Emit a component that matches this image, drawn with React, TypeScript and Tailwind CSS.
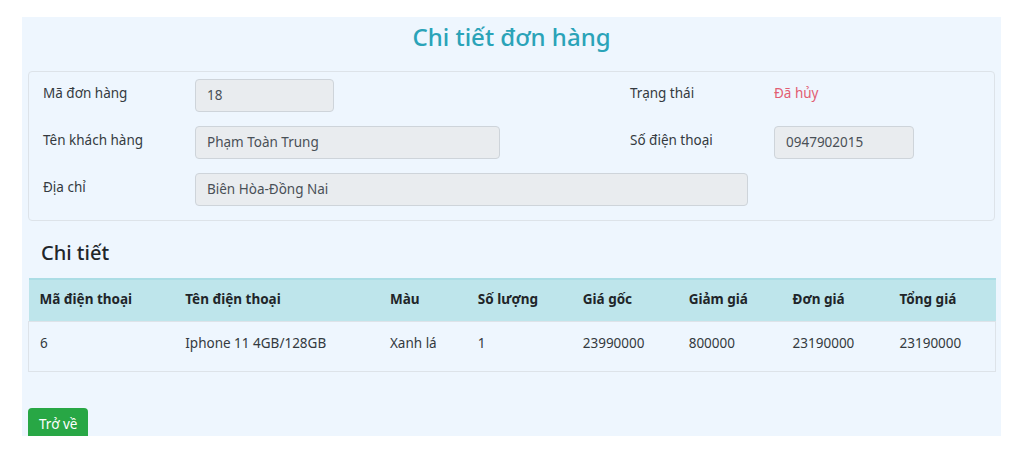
import React from 'react'

const COLS = [
  { label: 'Mã điện thoại', w: 'w-[146px]' },
  { label: 'Tên điện thoại', w: 'w-[205px]' },
  { label: 'Màu', w: 'w-[88px]' },
  { label: 'Số lượng', w: 'w-[105px]' },
  { label: 'Giá gốc', w: 'w-[106px]' },
  { label: 'Giảm giá', w: 'w-[104px]' },
  { label: 'Đơn giá', w: 'w-[107px]' },
  { label: 'Tổng giá', w: 'w-[107px]' },
]

const ROWS = [['6', 'Iphone 11 4GB/128GB', 'Xanh lá', '1', '23990000', '800000', '23190000', '23190000']]

function Field({ value, w }: { value: string; w: string }) {
  return (
    <div className={`${w} h-[33px] flex items-center px-[11px] bg-[#e9ecef] border border-[#ced4da] rounded text-[13.5px] text-[#495057]`}>
      {value}
    </div>
  )
}

export default function App() {
  return (
    <div className="w-[1024px] h-[456px] bg-white font-['Noto_Sans',sans-serif] text-[#212529]">
      <div className="pt-[17px] pl-[22px]">
        <div className="w-[979px] h-[419px] overflow-hidden bg-[#eef6fe] px-[6px]">
          {/* Title */}
          <h1 className="text-center text-[24px] leading-[40px] font-medium text-[#2aa3b8] h-[54px]">
            Chi tiết đơn hàng
          </h1>

          {/* Order info */}
          <div className="border border-[#dde3e9] rounded h-[150px] pt-[7px] pl-[14px] flex flex-col gap-[14px] text-[13.5px] text-[#343a40]">
            <div className="flex items-center h-[33px]">
              <div className="w-[587px] flex items-center">
                <span className="w-[152px] pb-[5px]">Mã đơn hàng</span>
                <Field value="18" w="w-[139px]" />
              </div>
              <span className="w-[144px] pb-[5px]">Trạng thái</span>
              <span className="text-[#e25d72] pb-[5px]">Đã hủy</span>
            </div>
            <div className="flex items-center h-[33px]">
              <div className="w-[587px] flex items-center">
                <span className="w-[152px] pb-[5px]">Tên khách hàng</span>
                <Field value="Phạm Toàn Trung" w="w-[305px]" />
              </div>
              <span className="w-[144px] pb-[5px]">Số điện thoại</span>
              <Field value="0947902015" w="w-[140px]" />
            </div>
            <div className="flex items-center h-[33px]">
              <span className="w-[152px] pb-[5px]">Địa chỉ</span>
              <Field value="Biên Hòa-Đồng Nai" w="w-[553px]" />
            </div>
          </div>

          {/* Details */}
          <h2 className="pl-[13px] pt-[18px] h-[57px] text-[20px] leading-[28px] font-medium text-[#212529]">Chi tiết</h2>

          <table className="w-[968px] border-collapse text-[13.5px] text-[#343a40]">
            <thead>
              <tr className="bg-[#bee5eb] border-t-2 border-[#abdde5]">
                {COLS.map(c => (
                  <th key={c.label} className={`${c.w} h-[42px] px-[11px] pb-[2px] text-left font-bold text-[#212529]`}>
                    {c.label}
                  </th>
                ))}
              </tr>
            </thead>
            <tbody>
              {ROWS.map((r, i) => (
                <tr key={i} className="border border-[#dde3e9]">
                  {r.map((v, j) => (
                    <td key={j} className="h-[50px] px-[11px] pt-[11px] align-top">{v}</td>
                  ))}
                </tr>
              ))}
            </tbody>
          </table>

          <button className="mt-[36px] h-[38px] px-[11px] pb-[4px] bg-[#28a745] text-white text-[13.5px] rounded">
            Trở về
          </button>
        </div>
      </div>
    </div>
  )
}
